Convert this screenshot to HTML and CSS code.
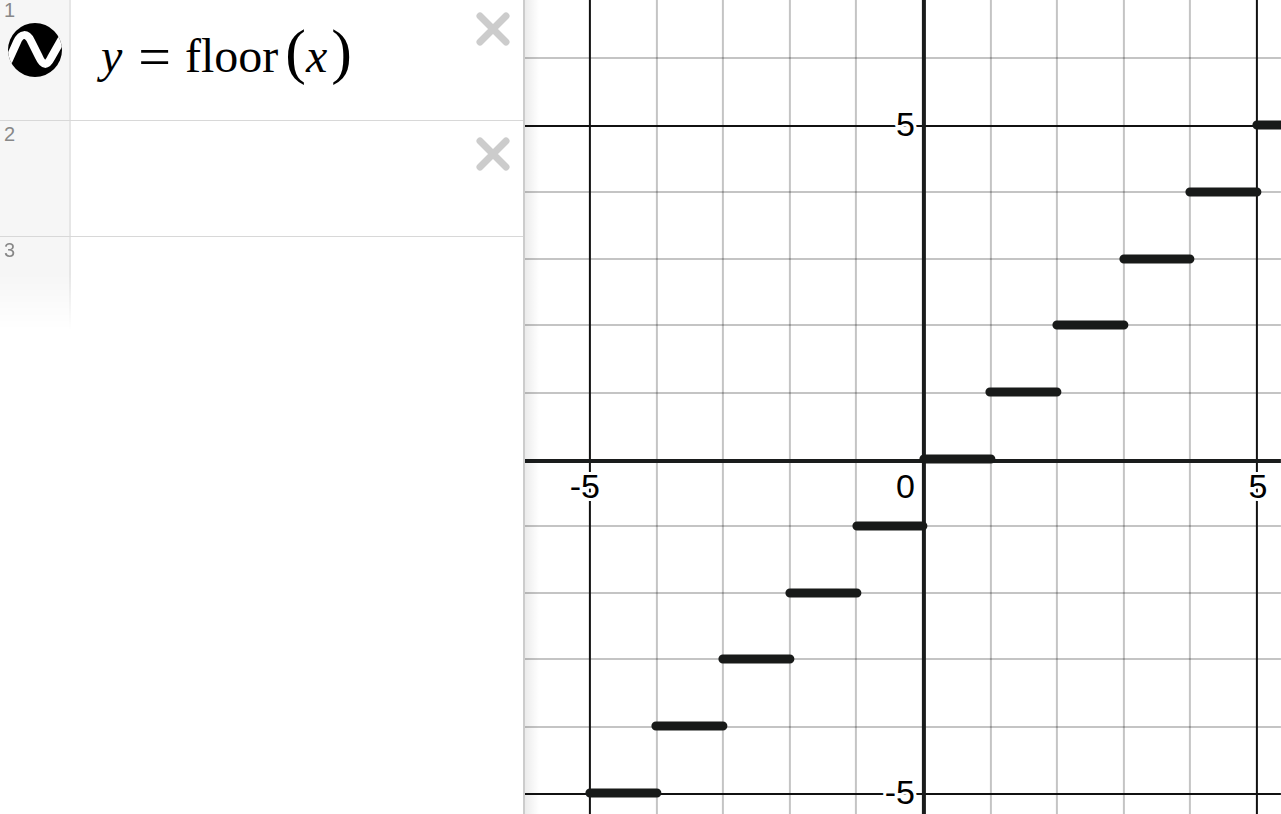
FILE: index.html
```html
<!DOCTYPE html>
<html lang="en">
<head>
<meta charset="utf-8">
<meta name="viewport" content="width=device-width, initial-scale=1">
<title>Graphing Calculator</title>
<link rel="stylesheet" href="styles.css">
</head>
<body>

<div class="calculator">
  <!-- Expression list -->
  <div class="expressions">
    <div class="row first">
      <div class="gutter">
        <span class="number">1</span>
        <button class="toggle" aria-label="Hide graph">
          <svg viewBox="0 0 54 54">
            <clipPath id="disc"><circle cx="27" cy="27" r="27"/></clipPath>
            <circle cx="27" cy="27" r="27"/>
            <path clip-path="url(#disc)" d="M-1 41L9 19C13 10 19 10 23 18L31 34C35 43 39 43 43 35L56 12" fill="none" stroke="#fff" stroke-width="8"/>
          </svg>
        </button>
      </div>
      <div class="math"><i>y</i><span class="equals">=</span><span>floor</span><span class="paren open">(</span><i>x</i><span class="paren shut">)</span></div>
      <button class="close" aria-label="Delete expression 1">
        <svg viewBox="0 0 34 34"><path d="M4 4L30 30M30 4L4 30"/></svg>
      </button>
    </div>
    <div class="row">
      <div class="gutter"><span class="number">2</span></div>
      <div class="math"></div>
      <button class="close" aria-label="Delete expression 2">
        <svg viewBox="0 0 34 34"><path d="M4 4L30 30M30 4L4 30"/></svg>
      </button>
    </div>
    <div class="row last">
      <div class="gutter"><span class="number">3</span></div>
    </div>
  </div>

  <!-- Graph paper -->
  <div class="graph">
    <svg viewBox="0 0 756 814" preserveAspectRatio="xMidYMid slice">
      <path class="minor" d="M132 0V814M198 0V814M265 0V814M331 0V814M466 0V814M532 0V814M599 0V814M665 0V814"/>
      <path class="minor" d="M0 58H756M0 192H756M0 259H756M0 325H756M0 393H756M0 526H756M0 593H756M0 659H756M0 727H756"/>
      <path class="major" d="M65 0V814M732 0V814M0 126H756M0 794H756"/>
      <path class="axis" d="M399 0V814M0 461H756"/>
      <g class="labels">
        <text x="60" y="498" text-anchor="middle">-5</text>
        <text x="733" y="498" text-anchor="middle">5</text>
        <text x="390" y="498" text-anchor="end">0</text>
        <text x="390" y="136" text-anchor="end">5</text>
        <text x="390" y="804" text-anchor="end">-5</text>
      </g>
      <path class="curve" d="M65 793H132M131 726H198M198 659H265M265 593H332M332 526H398M399 459H466M465 392H532M532 325H599M599 259H665M665 192H732M732 125H799"/>
    </svg>
  </div>
</div>

</body>
</html>
```
FILE: styles.css
```css
* {
  box-sizing: border-box;
}

body {
  margin: 0;
  background: #fff;
  font-family: "Liberation Sans", Arial, sans-serif;
}

button {
  border: none;
  padding: 0;
  background: none;
  cursor: pointer;
}

svg {
  display: block;
  width: 100%;
  height: 100%;
}

.calculator {
  display: flex;
  height: 100vh;
  overflow: hidden;
}

/* Left panel */
.expressions {
  width: 41%;
  flex-shrink: 0;
  border-right: 2px solid #ccc;
}

.row {
  display: flex;
  height: 116px;
  border-bottom: 1px solid #d8d8d8;
}

.row.first {
  height: 121px;
}

.row.last {
  height: 93px;
  border-bottom: none;
}

.gutter {
  width: 71px;
  flex-shrink: 0;
  padding-left: 4px;
  background: #f6f6f6;
  border-right: 2px solid #e6e6e6;
}

/* The next free row fades out */
.last .gutter {
  -webkit-mask-image: linear-gradient(#000 40%, transparent);
  mask-image: linear-gradient(#000 40%, transparent);
}

.number {
  display: block;
  height: 23px;
  font-size: 20px;
  line-height: 26px;
  color: #888;
}

.first .number {
  line-height: 20px;
}

.toggle {
  width: 54px;
  height: 54px;
  margin-left: 4px;
}

.math {
  display: flex;
  flex: 1;
  align-items: baseline;
  padding-left: 30px;
  font-family: "Liberation Serif", "Times New Roman", serif;
  font-size: 48px;
  line-height: 102px;
  color: #000;
}

.equals {
  align-self: flex-start;
  margin: 0 14px 0 16px;
  font-size: 58px;
  line-height: 114px;
}

.paren {
  font-size: 62px;
}

.open {
  margin-left: 7px;
}

.shut {
  margin-left: 4px;
}

.close {
  width: 34px;
  height: 34px;
  margin: 12px 13px 0 0;
}

.row:nth-child(2) .close {
  margin-top: 16px;
}

.close path {
  fill: none;
  stroke: #ccc;
  stroke-width: 7;
  stroke-linecap: round;
}

/* Right panel */
.graph {
  position: relative;
  flex: 1;
  min-width: 0;
}

/* Shadow cast by the expression list */
.graph::before {
  content: "";
  position: absolute;
  top: 0;
  bottom: 0;
  left: 0;
  width: 14px;
  background: linear-gradient(to right, rgba(0,0,0,0.08), transparent);
}

.minor {
  stroke: rgba(0,0,0,0.23);
  stroke-width: 2;
}

.major {
  stroke: #111;
  stroke-width: 2;
}

.axis {
  stroke: #1a1c1c;
  stroke-width: 4;
}

.curve {
  fill: none;
  stroke: #181a19;
  stroke-width: 9;
  stroke-linecap: round;
}

.labels {
  font-size: 34px;
  fill: #000;
  stroke: #fff;
  stroke-width: 6;
  stroke-linejoin: round;
  paint-order: stroke;
}
```
